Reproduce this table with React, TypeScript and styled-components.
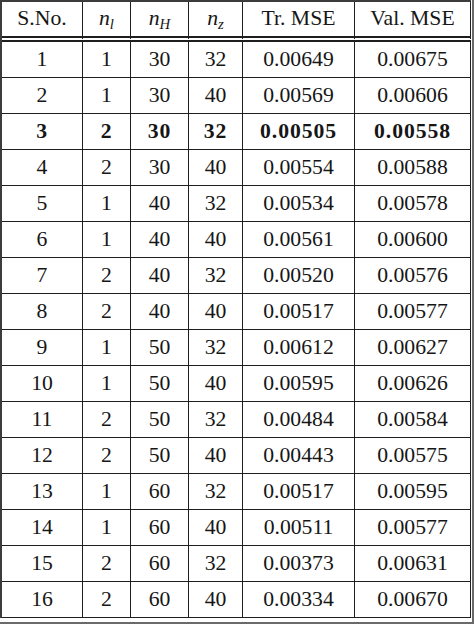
import React from 'react';
import styled, { createGlobalStyle } from 'styled-components';

const GlobalStyle = createGlobalStyle`
    html, body {
        margin: 0;
        padding: 0;
        background: #ffffff;
    }
`;

const Page = styled.div`
    box-sizing: border-box;
    width: 474px;
    height: 624px;
    padding: 0 1px 4px 0;
    border-right: 2px solid #6a6a6a;
    border-bottom: 2px solid #6a6a6a;
    overflow: hidden;
`;

const Table = styled.table`
    width: 471px;
    table-layout: fixed;
    border-collapse: separate;
    border-spacing: 0;
    border-top: 2px solid #3c3c3c;
    border-left: 2px solid #3c3c3c;
    font-family: 'Liberation Serif', 'DejaVu Serif', serif;
    font-size: 21.7px;
    color: #161616;
`;

const HeadCell = styled.th<{ $width: number }>`
    box-sizing: border-box;
    width: ${(p) => p.$width}px;
    height: 40px;
    padding: 0 0 1px;
    font-weight: normal;
    text-align: center;
    vertical-align: middle;
    border-right: 1px solid #1e1e1e;
    border-bottom: 6px double #1e1e1e;
`;

const Cell = styled.td<{ $bold?: boolean }>`
    box-sizing: border-box;
    height: 36px;
    padding: 0 0 1px;
    text-align: center;
    vertical-align: middle;
    font-weight: ${(p) => (p.$bold ? 'bold' : 'normal')};
    letter-spacing: ${(p) => (p.$bold ? '0.9px' : '0')};
    border-right: 1px solid #1e1e1e;
    border-bottom: 1px solid #1e1e1e;
`;

const Sub = styled.sub`
    font-size: 0.68em;
    font-style: italic;
    vertical-align: -0.28em;
    line-height: 0;
`;

const Var = styled.i`
    font-style: italic;
`;

const rows = [
    ['1', '1', '30', '32', '0.00649', '0.00675'],
    ['2', '1', '30', '40', '0.00569', '0.00606'],
    ['3', '2', '30', '32', '0.00505', '0.00558'],
    ['4', '2', '30', '40', '0.00554', '0.00588'],
    ['5', '1', '40', '32', '0.00534', '0.00578'],
    ['6', '1', '40', '40', '0.00561', '0.00600'],
    ['7', '2', '40', '32', '0.00520', '0.00576'],
    ['8', '2', '40', '40', '0.00517', '0.00577'],
    ['9', '1', '50', '32', '0.00612', '0.00627'],
    ['10', '1', '50', '40', '0.00595', '0.00626'],
    ['11', '2', '50', '32', '0.00484', '0.00584'],
    ['12', '2', '50', '40', '0.00443', '0.00575'],
    ['13', '1', '60', '32', '0.00517', '0.00595'],
    ['14', '1', '60', '40', '0.00511', '0.00577'],
    ['15', '2', '60', '32', '0.00373', '0.00631'],
    ['16', '2', '60', '40', '0.00334', '0.00670'],
];

function App(): React.ReactElement {
    return (
        <>
            <GlobalStyle />
            <Page>
                <Table>
                    <thead>
                        <tr>
                            <HeadCell $width={81}>S.No.</HeadCell>
                            <HeadCell $width={48}>
                                <Var>n</Var>
                                <Sub>l</Sub>
                            </HeadCell>
                            <HeadCell $width={58}>
                                <Var>n</Var>
                                <Sub>H</Sub>
                            </HeadCell>
                            <HeadCell $width={54}>
                                <Var>n</Var>
                                <Sub>z</Sub>
                            </HeadCell>
                            <HeadCell $width={112}>Tr. MSE</HeadCell>
                            <HeadCell $width={116}>Val. MSE</HeadCell>
                        </tr>
                    </thead>
                    <tbody>
                        {rows.map((r) => (
                            <tr key={r[0]}>
                                {r.map((v, i) => (
                                    <Cell key={i} $bold={r[0] === '3'}>
                                        {v}
                                    </Cell>
                                ))}
                            </tr>
                        ))}
                    </tbody>
                </Table>
            </Page>
        </>
    );
}

export default App;
